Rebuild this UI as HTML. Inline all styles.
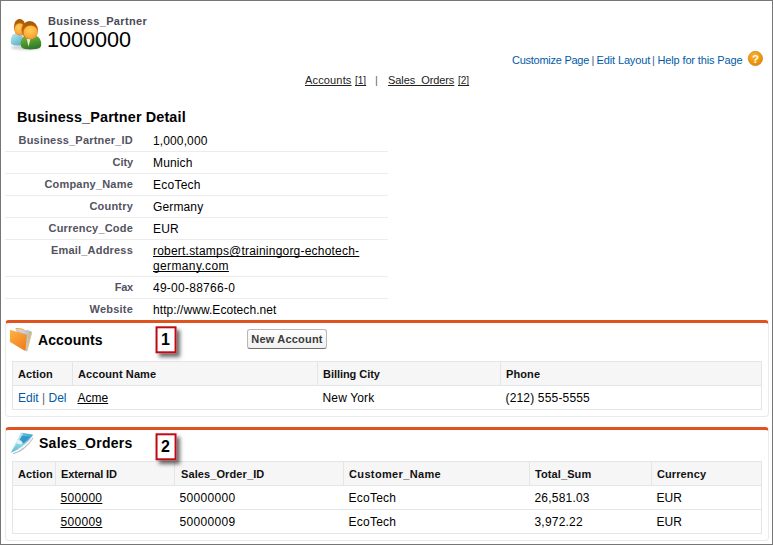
<!DOCTYPE html>
<html>
<head>
<meta charset="utf-8">
<title>Business_Partner: 1000000</title>
<style>
html,body{margin:0;padding:0;}
body{width:773px;height:545px;overflow:hidden;background:#fff;position:relative;
  font-family:"Liberation Sans",Arial,Helvetica,sans-serif;font-size:12px;color:#222;}
#frame{position:absolute;left:0;top:0;width:771px;height:543px;border:1px solid #767676;box-sizing:content-box;pointer-events:none;z-index:10;}
.abs{position:absolute;white-space:nowrap;}
a{color:#015ba7;text-decoration:none;}
u{text-decoration-skip-ink:none;}
.ptype{left:48px;top:15px;font-size:11px;font-weight:bold;color:#4a4a56;letter-spacing:.35px;}
.pdesc{left:47px;top:27px;font-size:21.6px;color:#000;}
.lk{top:54px;font-size:11px;color:#015ba7;line-height:13px;}
.lk.sp{color:#4a5f80;}
.an{top:74px;font-size:11px;color:#222;line-height:13px;text-decoration-skip-ink:none;}
.an.sm{font-size:10px;top:74px;}
h2.dt{position:absolute;margin:0;left:17px;top:109px;letter-spacing:.14px;font-size:14.4px;font-weight:bold;color:#000;white-space:nowrap;}
table.detail{position:absolute;left:5px;top:130px;width:383px;border-collapse:collapse;table-layout:fixed;}
table.detail td{border-bottom:1px solid #ececec;padding:4px 0 2px 0;line-height:15px;vertical-align:top;}
table.detail td.l{width:128px;text-align:right;font-size:11px;font-weight:bold;color:#53535f;padding:3px 10px 3px 0;letter-spacing:.2px;}
table.detail td.d{padding-left:10px;font-size:12px;color:#000;}
table.detail td.d u{color:#000;}
.rl{position:absolute;left:5px;width:762px;border:1px solid #e9eaec;border-top:3px solid #e0531e;border-radius:4px;background:#fff;box-sizing:content-box;}
.rl h3{position:absolute;margin:0;letter-spacing:.1px;font-size:14px;font-weight:bold;color:#000;white-space:nowrap;}
.callout{position:absolute;z-index:3;width:17px;height:23px;transform:translate(-.45px,.3px);border:2px solid #bf0a12;background:#fff;box-shadow:3.500px 4px 4px rgba(0,0,0,.58);font-size:16px;font-weight:bold;color:#000;text-align:center;line-height:24px;text-indent:-1px;}
.btn{position:absolute;left:241px;top:6px;width:78px;height:18px;letter-spacing:.2px;border:1px solid #b8b8b8;border-bottom-color:#6e6e6e;border-radius:3px;background:linear-gradient(#fdfdfd,#f1f1f1);font-size:11px;font-weight:bold;color:#3a3a3a;text-align:center;line-height:19px;}
table.list{position:absolute;left:6px;border-collapse:collapse;width:750px;table-layout:fixed;background:#fff;border:1px solid #e4e5e6;}
table.list th{background:#f6f6f6;border:1px solid #e4e5e6;font-size:11px;font-weight:bold;color:#111;text-align:left;padding:1px 0 0 5px;height:22px;line-height:22px;white-space:nowrap;letter-spacing:.1px;}
table.list td{font-size:12px;color:#000;padding:2px 0 0 5px;height:21px;line-height:21px;border-bottom:1px solid #e4e5e6;white-space:nowrap;}
table.list td u{color:#000;}
table.list td .s{color:#666;}
</style>
</head>
<body>
<div id="frame"></div>

<svg class="abs" style="left:6px;top:14px" width="40" height="40" viewBox="0 0 40 40">
  <defs>
    <linearGradient id="hair" x1="0" y1="0" x2="0" y2="1"><stop offset="0" stop-color="#9c5600"/><stop offset=".4" stop-color="#c4620c"/><stop offset="1" stop-color="#e27418"/></linearGradient>
    <radialGradient id="face" cx="45%" cy="35%" r="70%"><stop offset="0" stop-color="#ffd050"/><stop offset=".6" stop-color="#fdb040"/><stop offset="1" stop-color="#f08a30"/></radialGradient>
    <linearGradient id="bb" x1="0" y1="0" x2=".6" y2="1"><stop offset="0" stop-color="#c4eef0"/><stop offset="1" stop-color="#5fb4cc"/></linearGradient>
    <linearGradient id="gb" x1="0" y1="0" x2=".3" y2="1"><stop offset="0" stop-color="#7cb838"/><stop offset=".6" stop-color="#4b962c"/><stop offset="1" stop-color="#2f7a2c"/></linearGradient>
    <filter id="sh" x="-20%" y="-20%" width="140%" height="160%"><feGaussianBlur stdDeviation="1"/></filter>
  </defs>
  <ellipse cx="20" cy="33.500" rx="15" ry="2.500" fill="#000" opacity=".18" filter="url(#sh)"/>
  <path d="M4.800 28 Q4.500 20.500 9.500 19 L16.500 18.500 L17 31 Q8 32.500 5.500 30.200 Q4.800 29.500 4.800 28Z" fill="url(#bb)"/>
  <ellipse cx="13.700" cy="13.200" rx="5.800" ry="8.300" fill="url(#hair)"/>
  <ellipse cx="13.700" cy="15.300" rx="5.200" ry="6" fill="url(#face)"/>
  <path d="M14.800 31 Q14.200 23.500 19.500 21.800 L30 21.800 Q35.400 23.500 35.200 31 Q35 34.300 30 35 Q24 35.800 19 35 Q15 34.200 14.800 31Z" fill="url(#gb)"/>
  <path d="M20.300 23 L25 23 L22.500 32.400Z" fill="#e4f0c8"/>
  <ellipse cx="23.700" cy="16.100" rx="8.300" ry="9.100" fill="url(#hair)"/>
  <ellipse cx="24.600" cy="18.400" rx="7.100" ry="6.800" fill="url(#face)"/>
</svg>
<div class="abs ptype">Business_Partner</div>
<div class="abs pdesc">1000000</div>

<a class="abs lk" style="left:512px;letter-spacing:-.26px">Customize Page</a><span class="abs lk sp" style="left:591.500px">|</span><a class="abs lk" style="left:596.600px;letter-spacing:-.14px">Edit Layout</a><span class="abs lk sp" style="left:652px">|</span><a class="abs lk" style="left:657.500px;letter-spacing:-.14px">Help for this Page</a>
<svg class="abs" style="left:747px;top:50px" width="17" height="17" viewBox="0 0 17 17">
  <defs><radialGradient id="hp" cx="40%" cy="30%" r="75%"><stop offset="0" stop-color="#f8ad2c"/><stop offset=".7" stop-color="#ee950c"/><stop offset="1" stop-color="#d8820a"/></radialGradient></defs>
  <circle cx="8.400" cy="8.500" r="7.200" fill="url(#hp)" stroke="#c97c10" stroke-width=".6"/>
  <text x="8.400" y="12.600" font-family="Liberation Sans, sans-serif" font-size="11.500" font-weight="bold" fill="#fff" text-anchor="middle">?</text>
</svg>

<u class="abs an" style="left:305px;letter-spacing:.16px">Accounts</u><u class="abs an sm" style="left:355px">[1]</u><span class="abs an" style="left:375px;color:#666">|</span><u class="abs an" style="left:388px;letter-spacing:-.08px">Sales_Orders</u><u class="abs an sm" style="left:458px">[2]</u>

<h2 class="dt">Business_Partner Detail</h2>
<table class="detail">
  <tr><td class="l">Business_Partner_ID</td><td class="d" style="letter-spacing:.12px">1,000,000</td></tr>
  <tr><td class="l" style="letter-spacing:-.1px">City</td><td class="d" style="letter-spacing:.15px">Munich</td></tr>
  <tr><td class="l">Company_Name</td><td class="d" style="letter-spacing:.24px">EcoTech</td></tr>
  <tr><td class="l">Country</td><td class="d" style="letter-spacing:.14px">Germany</td></tr>
  <tr><td class="l">Currency_Code</td><td class="d" style="letter-spacing:.15px">EUR</td></tr>
  <tr><td class="l">Email_Address</td><td class="d"><u style="letter-spacing:.21px">robert.stamps@trainingorg-echotech-</u><br><u style="letter-spacing:.37px">germany.com</u></td></tr>
  <tr><td class="l" style="letter-spacing:-.2px">Fax</td><td class="d" style="letter-spacing:.26px">49-00-88766-0</td></tr>
  <tr><td class="l" style="border-bottom:none">Website</td><td class="d" style="border-bottom:none;letter-spacing:.06px">http://www.Ecotech.net</td></tr>
</table>

<div class="rl" style="top:320px;height:93px;">
  <svg class="abs" style="left:-2px;top:-1px" width="36" height="36" viewBox="0 0 36 36">
    <defs>
      <linearGradient id="fo" x1="0" y1="0" x2=".7" y2="1"><stop offset="0" stop-color="#ffb444"/><stop offset=".5" stop-color="#f89a30"/><stop offset="1" stop-color="#ee7f22"/></linearGradient>
      <linearGradient id="pp" x1="0" y1="0" x2="1" y2="0"><stop offset="0" stop-color="#e9e9e9"/><stop offset="1" stop-color="#b4b4b4"/></linearGradient>
    </defs>
    <path d="M11.300 6.800 L12 6.100 L19.500 7.300 L20 8 L22.500 8.400 L23 7.800 L27.200 9.300 Q28.300 9.800 28 11 L23.600 28.600 Q23.200 29.800 22.200 29.300 L21 28.600Z" fill="#c9c9c9"/>
    <path d="M11.500 6.500 L19.800 7.500 L27 9.800 Q27.700 10.200 27.500 11 L23 28.500 L21.300 28 L23.200 13Z" fill="url(#pp)"/>
    <path d="M12 6.300 L19.600 7.400" stroke="#f5a030" stroke-width=".9" fill="none"/>
    <path d="M27.600 10.200 L22.700 29" stroke="#f7c83a" stroke-width="1" stroke-dasharray="2.200 1" fill="none"/>
    <path d="M6.600 7.900 L22.200 12.600 Q23 12.900 22.900 13.800 L21.500 27.800 Q21.300 29 20.300 28.400 L6.500 20.300 Q5.900 19.900 5.900 19.200 L5.900 8.500 Q5.900 7.700 6.600 7.900Z" fill="url(#fo)"/>
  </svg>
  <h3 style="left:32px;top:9px;">Accounts</h3>
  <div class="callout" style="left:150px;top:3px;">1</div>
  <div class="btn">New Account</div>
  <table class="list" style="top:38px;">
    <colgroup><col style="width:60px"><col style="width:245px"><col style="width:183px"><col></colgroup>
    <tr><th>Action</th><th>Account Name</th><th style="letter-spacing:-.05px">Billing City</th><th>Phone</th></tr>
    <tr><td><a>Edit</a> <span class="s">|</span> <a>Del</a></td><td><u>Acme</u></td><td style="letter-spacing:.15px">New York</td><td style="letter-spacing:.17px">(212) 555-5555</td></tr>
  </table>
</div>

<div class="rl" style="top:427px;height:110px;">
  <svg class="abs" style="left:-2px;top:-2px" width="36" height="36" viewBox="0 0 36 36">
    <defs>
      <linearGradient id="ir" x1="0" y1="1" x2="1" y2="0"><stop offset="0" stop-color="#58b8d8"/><stop offset=".45" stop-color="#8cd8e6"/><stop offset="1" stop-color="#3f9fcf"/></linearGradient>
      <filter id="sh2" x="-20%" y="-20%" width="140%" height="140%"><feGaussianBlur stdDeviation=".7"/></filter>
    </defs>
    <path d="M8.500 25.600 Q21 21.500 29.300 9 L29 11 Q21 23 9.500 26.300Z" fill="#555" opacity=".4" filter="url(#sh2)"/>
    <path d="M6.900 24.800 Q20 20.500 28.900 7.200 L29.200 8.600 Q20.500 21.800 8 25.300Z" fill="#f4f6f8"/>
    <path d="M6.900 24.800 L16.600 5.400 Q17.200 4.600 18.200 4.800 L28.400 6.600 Q29.200 6.900 28.700 7.600 Q20.500 19.500 6.900 24.800Z" fill="url(#ir)"/>
    <path d="M17 7.800 L26.200 8.600 Q23 13 19.500 15.500 L15.800 11.500Z" fill="#2f8fc4" opacity=".85" filter="url(#sh2)"/>
    <path d="M16.500 5.200 L19.500 5.300 L8.500 22.500Z" fill="#c8f2f0" opacity=".8"/>
    <ellipse cx="15.300" cy="14.200" rx="3" ry="1.900" fill="#e6f2fa" transform="rotate(20 15.300 14.200)"/>
  </svg>
  <h3 style="left:33px;top:5px;letter-spacing:.28px">Sales_Orders</h3>
  <div class="callout" style="left:150px;top:3px;">2</div>
  <table class="list" style="top:31px;">
    <colgroup><col style="width:43px"><col style="width:119px"><col style="width:169px"><col style="width:186px"><col style="width:122px"><col></colgroup>
    <tr><th>Action</th><th style="letter-spacing:-.15px">External ID</th><th style="padding-left:6px">Sales_Order_ID</th><th style="letter-spacing:.36px">Customer_Name</th><th>Total_Sum</th><th>Currency</th></tr>
    <tr><td></td><td><u style="letter-spacing:.3px">500000</u></td><td style="letter-spacing:.33px">50000000</td><td style="letter-spacing:.24px">EcoTech</td><td style="letter-spacing:.2px">26,581.03</td><td>EUR</td></tr>
    <tr><td></td><td><u style="letter-spacing:.3px">500009</u></td><td style="letter-spacing:.33px">50000009</td><td style="letter-spacing:.24px">EcoTech</td><td style="letter-spacing:.2px">3,972.22</td><td>EUR</td></tr>
  </table>
</div>
</body>
</html>
